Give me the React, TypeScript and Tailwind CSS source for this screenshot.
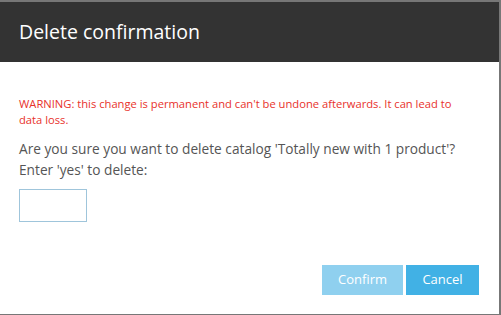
export default function App() {
  return (
    <div className="w-[501px] h-[315px] bg-[#777777] pt-[2px] pb-[1px] pr-[2px] font-['Open_Sans',sans-serif]">
      <div className="flex h-[312px] w-[499px] flex-col bg-white">
        <div className="flex h-[60px] items-center bg-[#333333] px-[19px]">
          <h2 className="text-[19.5px] text-white">Delete confirmation</h2>
        </div>

        <div className="flex flex-1 flex-col px-[19px] pt-[34px]">
          <p className="pr-[12px] text-[11.2px] leading-[16px] text-[#e8312b]">
            WARNING: this change is permanent and can't be undone afterwards. It can lead to data loss.
          </p>
          <p className="mt-[10px] text-[13.7px] leading-[21px] text-[#555555]">
            Are you sure you want to delete catalog 'Totally new with 1 product'? Enter 'yes' to delete:
          </p>
          <input
            type="text"
            className="mt-[9px] h-[33px] w-[68px] border border-[#9fc5db] outline-none"
          />

          <div className="mt-auto mb-[19px] flex justify-end gap-[3px] pr-[1px]">
            <button className="h-[30px] w-[81px] bg-[#8fd0ef] text-[13px] text-white">Confirm</button>
            <button className="h-[30px] w-[73px] bg-[#41b1e5] text-[13px] text-white">Cancel</button>
          </div>
        </div>
      </div>
    </div>
  );
}
